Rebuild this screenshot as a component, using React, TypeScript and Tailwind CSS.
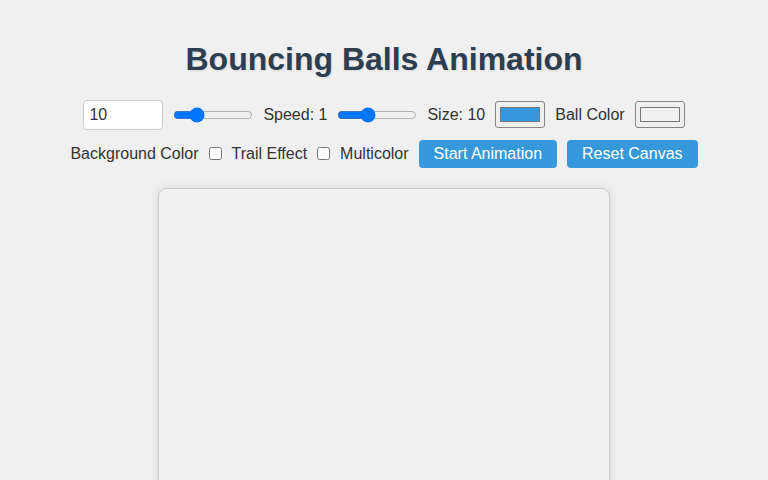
const App = () => {
  return (
    <div
      className="min-h-[480px] bg-[#f0f0f0] px-5 pt-5 text-[16px] text-[#333]"
      style={{ fontFamily: '"Liberation Sans", Arial, sans-serif' }}
    >
      <h1 className="my-[21.44px] text-center text-[32px] font-bold leading-[37px] text-[#2c3e50] [text-shadow:1px_1px_2px_rgba(0,0,0,0.1)]">
        Bouncing Balls Animation
      </h1>
      <div className="mb-5 flex flex-wrap items-center justify-center gap-[10px]">
        <input
          type="number"
          defaultValue={10}
          className="h-[30px] w-[80px] rounded-[4px] border border-[#ccc] bg-white px-[5px] text-[16px]"
        />
        <input type="range" min={0} max={100} defaultValue={25} className="w-[80px]" />
        <span>Speed: 1</span>
        <input type="range" min={0} max={100} defaultValue={36} className="w-[80px]" />
        <span>Size: 10</span>
        <input
          type="color"
          defaultValue="#3498db"
          className="h-[27px] w-[50px] rounded-[3px] border border-[#858585] bg-[#efefef] px-[2px] py-[1px]"
        />
        <span>Ball Color</span>
        <input
          type="color"
          defaultValue="#f0f0f0"
          className="h-[27px] w-[50px] rounded-[3px] border border-[#858585] bg-[#efefef] px-[2px] py-[1px]"
        />
        <span>Background Color</span>
        <input type="checkbox" className="h-[13px] w-[13px]" />
        <span>Trail Effect</span>
        <input type="checkbox" className="h-[13px] w-[13px]" />
        <span>Multicolor</span>
        <button className="rounded-[4px] bg-[#3498db] px-[15px] py-[5px] leading-[18px] text-white">
          Start Animation
        </button>
        <button className="rounded-[4px] bg-[#3498db] px-[15px] py-[5px] leading-[18px] text-white">
          Reset Canvas
        </button>
      </div>
      <div className="mx-auto h-[400px] w-[452px] rounded-[8px] border border-[#ccc] shadow-[0_0_10px_rgba(0,0,0,0.1)]" />
    </div>
  );
};

export default App;
